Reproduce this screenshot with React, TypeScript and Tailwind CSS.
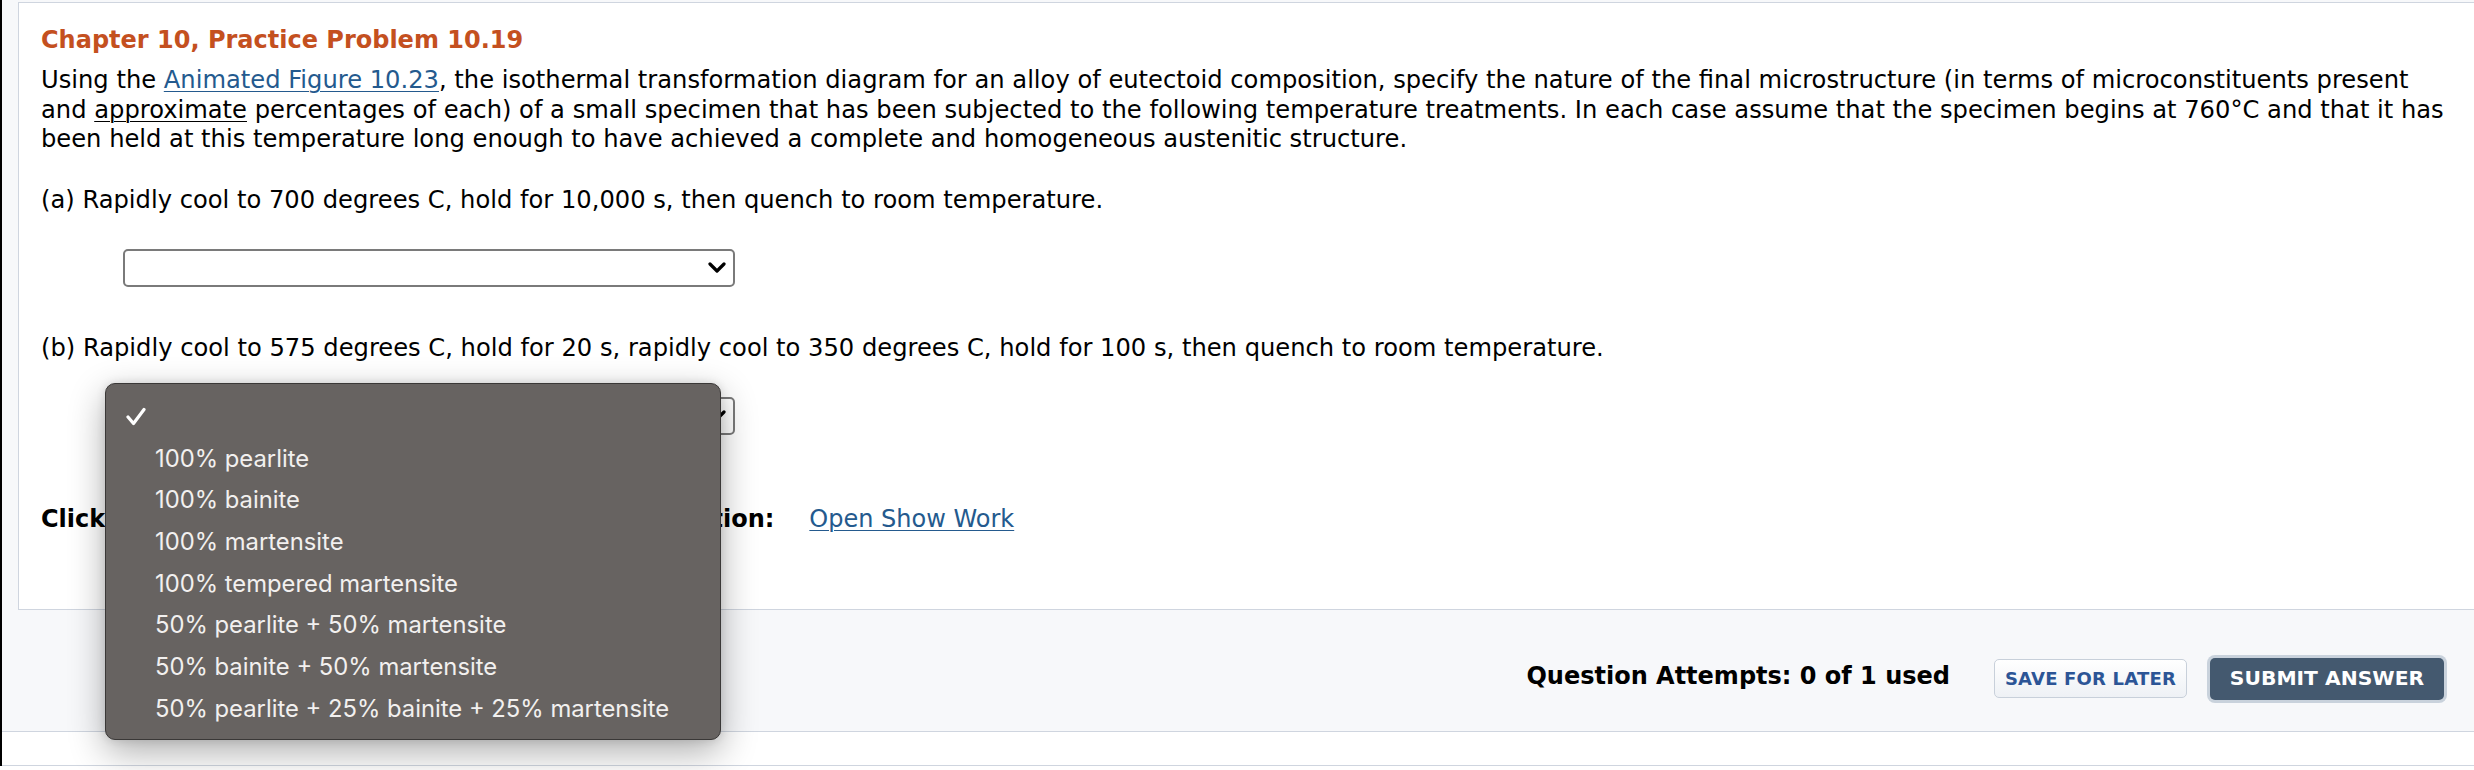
import React from "react";

const Chevron = () => (
  <svg width="18" height="12" viewBox="0 0 18 12" className="block">
    <polyline points="2,2 9,9 16,2" fill="none" stroke="#000" strokeWidth="3.2" strokeLinecap="round" strokeLinejoin="round" />
  </svg>
);

const SelectBox = ({ className = "" }: { className?: string }) => (
  <div
    className={
      "ml-[82px] flex h-[38px] w-[612px] items-center justify-end rounded-[5px] border-2 border-[#7a7a7a] bg-white pr-[7px] " +
      className
    }
  >
    <Chevron />
  </div>
);

const options = [
  "100% pearlite",
  "100% bainite",
  "100% martensite",
  "100% tempered martensite",
  "50% pearlite + 50% martensite",
  "50% bainite + 50% martensite",
  "50% pearlite + 25% bainite + 25% martensite",
];

export default function App() {
  return (
    <div className="relative h-[770px] w-[2474px] overflow-hidden bg-white font-['DejaVu_Sans',_Verdana,_sans-serif] text-black">
      <div className="border-l-2 border-black">
        <div className="bg-[#f7f8fa] pl-4 pt-[2px]">
          <div className="border-b border-l border-t border-[#cfd5df] bg-white pb-[74px] pl-[22px] pr-[10px] pt-[22px]">
            <h1 className="text-[24px] font-bold leading-[30px] text-[#c4501f]">
              Chapter 10, Practice Problem 10.19
            </h1>
            <p className="mt-[11px] whitespace-nowrap text-[24.2px] leading-[29.5px]">
              Using the{" "}
              <span className="text-[#245a8e] underline decoration-1 underline-offset-[3px]">Animated Figure 10.23</span>, the
              isothermal transformation diagram for an alloy of eutectoid composition, specify the nature of the final
              microstructure (in terms of microconstituents present
              <br />
              and <span className="underline decoration-1 underline-offset-[3px]">approximate</span> percentages of each) of a
              small specimen that has been subjected to the following temperature treatments. In each case assume that the
              specimen begins at 760°C and that it has
              <br />
              been held at this temperature long enough to have achieved a complete and homogeneous austenitic structure.
            </p>
            <p className="mt-[31.5px] text-[24.2px] leading-[29.5px]">
              (a) Rapidly cool to 700 degrees C, hold for 10,000 s, then quench to room temperature.
            </p>
            <SelectBox className="mt-[33px]" />
            <p className="mt-[47.5px] text-[24.2px] leading-[29.5px]">
              (b) Rapidly cool to 575 degrees C, hold for 20 s, rapidly cool to 350 degrees C, hold for 100 s, then quench
              to room temperature.
            </p>
            <SelectBox className="mt-[33px]" />
            <div className="mt-[70.5px] flex items-baseline text-[24px] leading-[29.5px]">
              <span className="font-bold">Click if you would like to Show Work for this question:</span>
              <span className="ml-[35px] text-[#245a8e] underline decoration-1 underline-offset-[3px]">Open Show Work</span>
            </div>
          </div>
          <div className="-ml-4 flex h-[122px] items-start justify-end border-b border-[#cfd5df] bg-[#f7f8fa] pr-[30px] pt-[48px]">
            <div className="mr-[44px] mt-[4px] text-[24px] font-bold leading-[29.5px]">Question Attempts: 0 of 1 used</div>
            <button className="mt-[1px] flex h-[39px] w-[193px] items-center justify-center rounded-[5px] border border-[#c8d0da] bg-gradient-to-b from-white to-[#eef1f5] text-[18px] font-bold tracking-[0.2px] text-[#2c5596]">
              SAVE FOR LATER
            </button>
            <button className="ml-[23px] flex h-[42px] w-[234px] items-center justify-center rounded-[5px] bg-[#44596f] text-[20.3px] font-bold text-white shadow-[0_0_0_3px_#c9d2dc]">
              SUBMIT ANSWER
            </button>
          </div>
        </div>
        <div className="h-[34px] border-b border-[#cfd5df] bg-white" />
      </div>

      {/* Native select popup menu */}
      <div className="absolute left-[105px] top-[383px] h-[357px] w-[616px] rounded-[10px] border border-[#3a3837] bg-[#676361] pb-[11px] pt-[12px] font-['Inter',_'Noto_Sans',_sans-serif] text-[#f2f0ef] shadow-[0_12px_36px_rgba(0,0,0,0.32),0_0_10px_rgba(0,0,0,0.12)]">
        <div className="flex h-[41.7px] items-center pl-[20px]">
          <svg width="20" height="19" viewBox="0 0 20 19">
            <polyline points="2,10 7.5,16.5 18,2.5" fill="none" stroke="#ffffff" strokeWidth="3.2" strokeLinecap="round" strokeLinejoin="round" />
          </svg>
        </div>
        {options.map((o) => (
          <div key={o} className="h-[41.7px] pl-[49px] text-[23.8px] leading-[41.7px]">
            {o}
          </div>
        ))}
      </div>
    </div>
  );
}
